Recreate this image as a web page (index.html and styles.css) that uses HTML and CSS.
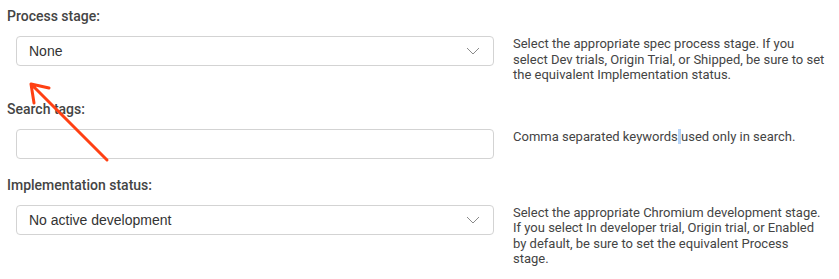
FILE: index.html
```html
<!DOCTYPE html>
<html lang="en">
<head>
  <meta charset="UTF-8" />
  <meta name="viewport" content="width=device-width, initial-scale=1.0">
  <title>Feature - Process stage</title>
  <link rel="stylesheet" href="styles.css">
</head>
<body>

  <section class="feature-form">

    <div class="field">
      <label class="field-label">Process stage:</label>
      <div class="field-row">
        <div class="select-box">
          <span>None</span>
          <svg class="chevron" width="14" height="8" viewBox="0 0 14 8"><path d="M1 1 L7 7 L13 1" /></svg>
        </div>
        <p class="help-text">Select the appropriate spec process stage. If you select Dev trials, Origin Trial, or Shipped, be sure to set the equivalent Implementation status.</p>
      </div>
    </div>

    <div class="field">
      <label class="field-label" for="searchTags">Search tags:</label>
      <div class="field-row">
        <input type="text" id="searchTags" class="text-input">
        <p class="help-text">Comma separated keywords<span class="selected-text"> </span>used only in search.</p>
      </div>
    </div>

    <div class="field">
      <label class="field-label">Implementation status:</label>
      <div class="field-row">
        <div class="select-box">
          <span>No active development</span>
          <svg class="chevron" width="14" height="8" viewBox="0 0 14 8"><path d="M1 1 L7 7 L13 1" /></svg>
        </div>
        <p class="help-text">Select the appropriate Chromium development stage. If you select In developer trial, Origin trial, or Enabled by default, be sure to set the equivalent Process stage.</p>
      </div>
    </div>

  </section>

  <!-- annotation arrow drawn over the form -->
  <svg class="annotation" width="839" height="279" viewBox="0 0 839 279">
    <path d="M107 160 L31 84 M31 84 L49 88 M31 84 L34 103" />
  </svg>

</body>
</html>
```

FILE: styles.css
```css
body {
  margin: 0;
  padding: 0;
  background: #fff;
  position: relative;
  overflow: hidden;
}

.feature-form {
  padding: 8px 7px 0;
}

.field {
  margin-bottom: 18px;
}

.field:last-child {
  margin-bottom: 0;
}

.field-label {
  display: block;
  font-family: 'Roboto', sans-serif;
  font-weight: 500;
  font-size: 14px;
  line-height: 16px;
  color: #444;
  margin-bottom: 12px;
}

.field-row {
  display: grid;
  grid-template-columns: 478px 314px;
  column-gap: 19px;
  padding-left: 9px;
  align-items: start;
}

.select-box,
.text-input {
  box-sizing: border-box;
  height: 30px;
  width: 478px;
  border: 1px solid #d3d3d3;
  border-radius: 4px;
  background: #fff;
}

.select-box {
  display: flex;
  align-items: center;
  justify-content: space-between;
  padding: 0 13px 0 12px;
  font-family: 'Liberation Sans', Arial, sans-serif;
  font-size: 14px;
  color: #333;
}

.text-input {
  margin: 0;
  padding: 0 12px;
  font-size: 14px;
  outline: none;
}

.chevron path {
  fill: none;
  stroke: #8a8a8a;
  stroke-width: 1;
}

.help-text {
  margin: 0;
  font-family: 'Roboto', sans-serif;
  font-size: 13px;
  line-height: 15.5px;
  color: #444;
}

.selected-text {
  background: #b7d4f7;
}

.annotation {
  position: absolute;
  top: 0;
  left: 0;
  pointer-events: none;
}

.annotation path {
  fill: none;
  stroke: #ff4013;
  stroke-width: 3;
  stroke-linecap: round;
  stroke-linejoin: round;
}
```
